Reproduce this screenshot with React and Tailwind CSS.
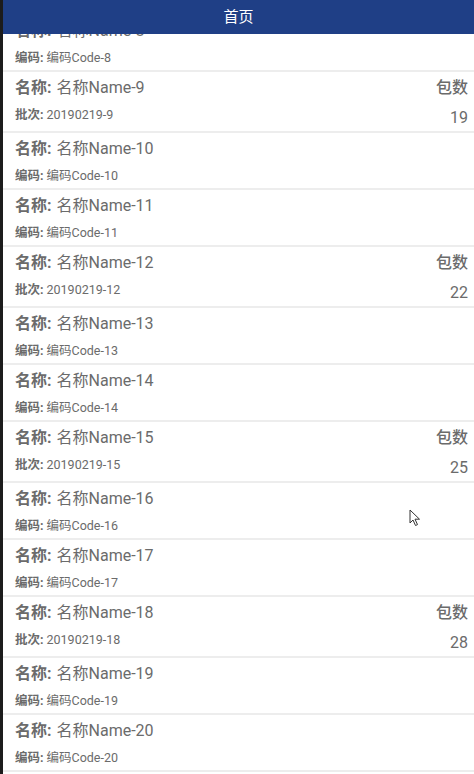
import React from "react";

const font = { fontFamily: 'Roboto, "Noto Sans CJK SC", "Noto Sans", sans-serif' };

function Row({ n }) {
  const pkg = n % 3 === 0;
  return (
    <div className={`flex justify-between border-b-2 border-[#ededed] pl-[12px] pr-[6px] ${pkg ? "h-[61px]" : "h-[57px]"}`}>
      <div className="flex flex-col">
        <div className="mt-[4px] h-[24px] flex items-center text-[16px] text-[#6b6b6b] leading-none">
          <span className="font-bold">名称:</span>
          <span className="ml-[5px]">名称Name-{n}</span>
        </div>
        <div className="mt-[3px] h-[24px] flex items-center text-[12.5px] text-[#6b6b6b] leading-none">
          <span className="font-bold">{pkg ? "批次:" : "编码:"}</span>
          <span className="ml-[3px]">{pkg ? `20190219-${n}` : `编码Code-${n}`}</span>
        </div>
      </div>
      {pkg && (
        <div className="flex flex-col items-end">
          <div className="mt-[4px] h-[24px] flex items-center text-[16px] text-[#6b6b6b] font-medium leading-none">包数</div>
          <div className="mt-[6px] h-[24px] flex items-center text-[16px] text-[#6b6b6b] leading-none">{n + 10}</div>
        </div>
      )}
    </div>
  );
}

export default function App() {
  const rows = [];
  for (let i = 8; i <= 21; i++) rows.push(i);
  return (
    <div className="relative flex h-[774px] w-[474px] overflow-hidden bg-white" style={font}>
      <div className="w-[3px] shrink-0 bg-[#1c1c1c]" />
      <div className="flex flex-1 flex-col min-w-0">
        <div className="h-[34px] shrink-0 bg-[#1f3f86] flex items-center justify-center text-white text-[15px]">首页</div>
        <div className="flex-1 overflow-hidden">
          <div className="-mt-[19px]">
            {rows.map((n) => (
              <Row key={n} n={n} />
            ))}
          </div>
        </div>
      </div>
      <svg className="absolute left-[409px] top-[509px]" width="12" height="18" viewBox="0 0 12 18">
        <path d="M1 1 L1 14 L4 11 L6.5 16.5 L8.5 15.6 L6 10.2 L10.5 10.2 Z" fill="#fff" stroke="#333" strokeWidth="1" strokeLinejoin="round" />
      </svg>
    </div>
  );
}
